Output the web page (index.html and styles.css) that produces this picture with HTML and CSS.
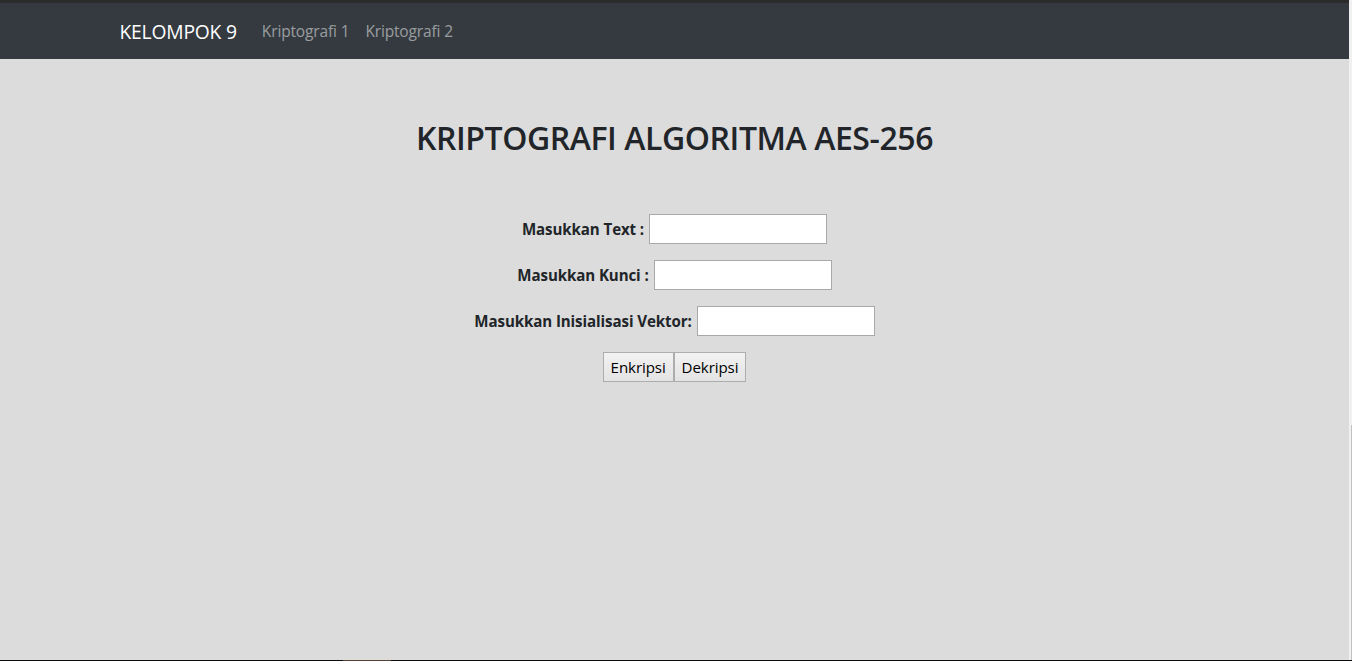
FILE: index.html
```html
<!DOCTYPE html>
<html lang="id">
<head>
<meta charset="utf-8">
<title>Kriptografi AES-256</title>
<link rel="stylesheet" href="styles.css">
</head>
<body>
<div class="screen">
  <div class="viewport">
    <div class="page">
      <nav class="navbar">
        <div class="container nav-inner">
          <a class="brand" href="#">KELOMPOK 9</a>
          <a class="nav-link" href="#">Kriptografi 1</a>
          <a class="nav-link" href="#">Kriptografi 2</a>
        </div>
      </nav>
      <main class="content">
        <h2 class="title">KRIPTOGRAFI ALGORITMA AES-256</h2>
        <form class="form">
          <div class="row"><label class="label">Masukkan Text :</label><input class="field" type="text"></div>
          <div class="row"><label class="label">Masukkan Kunci :</label><input class="field" type="text"></div>
          <div class="row"><label class="label">Masukkan Inisialisasi Vektor:</label><input class="field" type="text"></div>
          <div class="row buttons"><button class="btn" type="button">Enkripsi</button><button class="btn" type="button">Dekripsi</button></div>
        </form>
      </main>
    </div>
    <div class="scrollstrip"><div class="thumb"></div></div>
  </div>
  <div class="taskbar"><div class="task-item"></div></div>
</div>
</body>
</html>
```

FILE: styles.css
```css
html, body {
  margin: 0;
  padding: 0;
  height: 100%;
}
body {
  font-family: "Open Sans", "Noto Sans", sans-serif;
  background: #dcdcdc;
  color: #212529;
  overflow: hidden;
}
.screen {
  display: flex;
  flex-direction: column;
  height: 661px;
}
.viewport {
  flex: 1;
  display: flex;
  min-height: 0;
}
.page {
  flex: 1;
  display: flex;
  flex-direction: column;
  background: #dcdcdc;
}
.scrollstrip {
  width: 3px;
  background: #f0f0f0;
  display: flex;
  flex-direction: column;
  justify-content: flex-end;
  align-items: flex-end;
}
.thumb {
  width: 1px;
  height: 235px;
  background: #c2c2c2;
}
.taskbar {
  height: 1px;
  background: #0c0c0c;
  display: flex;
  padding-left: 343px;
}
.task-item {
  width: 48px;
  background: #5a4232;
}
.navbar {
  background: #343a40;
  border-top: 3px solid #2b2b2b;
  height: 56px;
  display: flex;
  align-items: center;
}
.container {
  width: 1140px;
  margin: 0 auto;
  padding: 0 15px;
  box-sizing: border-box;
}
.nav-inner {
  display: flex;
  align-items: center;
}
.brand {
  color: #fff;
  font-size: 19.3px;
  text-decoration: none;
  margin-right: 25px;
  letter-spacing: -0.2px;
}
.nav-link {
  color: rgba(255,255,255,.5);
  font-size: 15.5px;
  text-decoration: none;
  margin-right: 16px;
  letter-spacing: -0.15px;
}
.content {
  display: flex;
  flex-direction: column;
  align-items: center;
}
.title {
  margin: 60px 0 0;
  font-size: 32px;
  font-weight: 600;
  line-height: 1.2;
  letter-spacing: -0.43px;
}
.form {
  margin-top: 57px;
  display: flex;
  flex-direction: column;
  align-items: center;
  gap: 16px;
}
.row {
  display: flex;
  align-items: center;
}
.label {
  font-weight: 700;
  font-size: 15.1px;
  margin-right: 5px;
  letter-spacing: -0.1px;
}
.field {
  width: 178px;
  height: 30px;
  box-sizing: border-box;
  border: 1px solid #a9a9a9;
  background: #fff;
  padding: 0 4px;
  margin: 0;
  font: inherit;
}
.btn {
  height: 30px;
  box-sizing: border-box;
  border: 1px solid #adadad;
  background: linear-gradient(#f2f2f2, #e3e3e3);
  font-family: inherit;
  font-size: 15.1px;
  color: #000;
  padding: 0 7px;
  margin: 0;
  letter-spacing: -0.1px;
}
```
